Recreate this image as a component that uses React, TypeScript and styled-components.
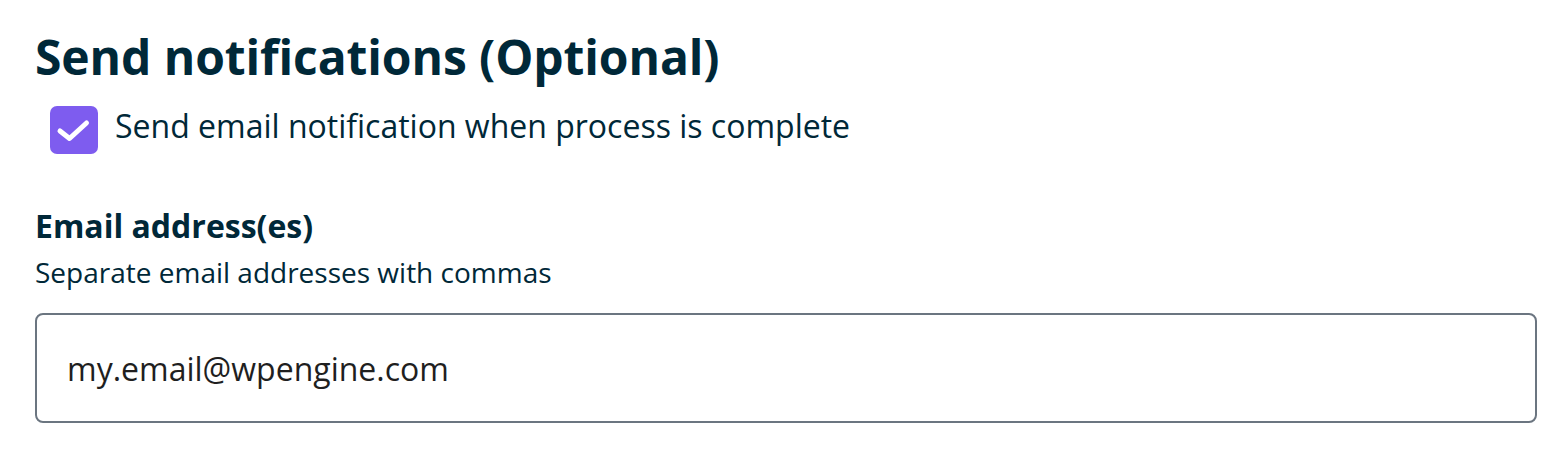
import React from "react";
import styled, { createGlobalStyle } from "styled-components";

const GlobalStyle = createGlobalStyle`
  html, body {
    margin: 0;
    padding: 0;
    background: #ffffff;
  }
  body {
    font-family: "Open Sans", "Noto Sans", sans-serif;
    color: #002838;
  }
  * { box-sizing: border-box; }
`;

const Page = styled.div`
  display: flex;
  flex-direction: column;
  padding: 28px 25px 40px 35px;
`;

const Heading = styled.h2`
  margin: 0;
  font-size: 48px;
  line-height: 58px;
  font-weight: 700;
  letter-spacing: -0.1px;
  color: #002838;
`;

const CheckRow = styled.label`
  display: flex;
  align-items: flex-start;
  gap: 17px;
  margin: 20px 0 0 15px;
  cursor: pointer;
`;

const Box = styled.span<{ $checked: boolean }>`
  flex: none;
  width: 48px;
  height: 48px;
  border-radius: 7px;
  background: ${(p) => (p.$checked ? "#7e5cef" : "#ffffff")};
  border: ${(p) => (p.$checked ? "none" : "2px solid #6b7782")};
  display: flex;
  align-items: center;
  justify-content: center;
`;

const CheckLabel = styled.span`
  font-size: 32px;
  line-height: 40px;
  color: #002838;
`;

const FieldLabel = styled.div`
  margin-top: 52px;
  font-size: 32px;
  line-height: 40px;
  font-weight: 700;
  color: #002838;
`;

const Hint = styled.div`
  margin-top: 6px;
  font-size: 28px;
  line-height: 40px;
  color: #002838;
`;

const TextInput = styled.input`
  margin-top: 21px;
  width: 100%;
  height: 110px;
  border: 2px solid #6b7580;
  border-radius: 8px;
  padding: 0 30px;
  font-family: "Open Sans", "Noto Sans", sans-serif;
  font-size: 32px;
  color: #1f1f1f;
  background: #ffffff;
  outline: none;
`;

const CheckIcon = () => (
  <svg width="48" height="48" viewBox="0 0 48 48" fill="none">
    <path
      d="M10 25 L19.5 32.5 L36.5 17"
      stroke="#ffffff"
      strokeWidth="5"
      strokeLinecap="round"
      strokeLinejoin="round"
    />
  </svg>
);

export default function App() {
  const [checked, setChecked] = React.useState(true);
  return (
    <>
      <GlobalStyle />
      <Page>
        <Heading>Send notifications (Optional)</Heading>
        <CheckRow onClick={() => setChecked((c) => !c)}>
          <Box $checked={checked}>{checked && <CheckIcon />}</Box>
          <CheckLabel>Send email notification when process is complete</CheckLabel>
        </CheckRow>
        <FieldLabel>Email address(es)</FieldLabel>
        <Hint>Separate email addresses with commas</Hint>
        <TextInput defaultValue="my.email@wpengine.com" />
      </Page>
    </>
  );
}
